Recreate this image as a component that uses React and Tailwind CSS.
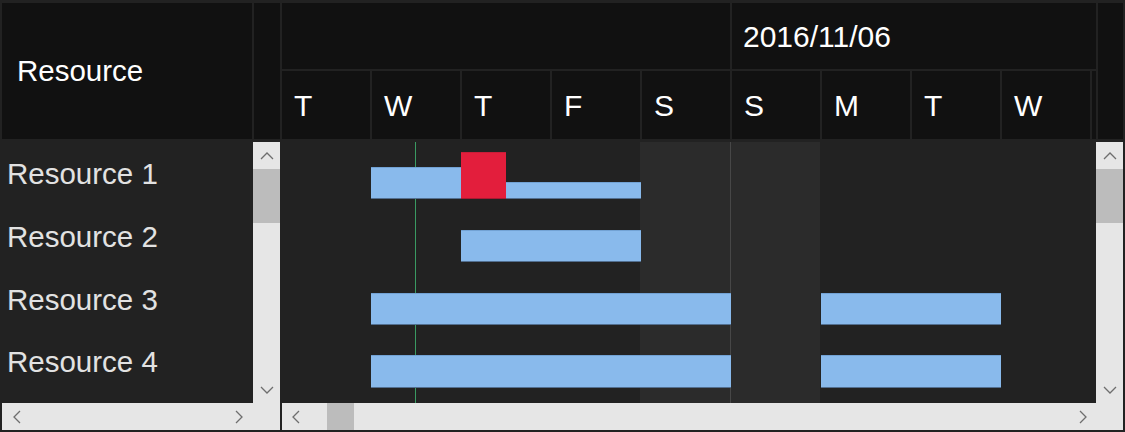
import React from "react";

const days = ["T", "W", "T", "F", "S", "S", "M", "T", "W"];
const resources = ["Resource 1", "Resource 2", "Resource 3", "Resource 4"];

// bars in px relative to the gantt canvas (left, top, width, height)
const bars = [
  { l: 89, t: 25, w: 90, h: 32, kind: "blue" },
  { l: 224, t: 40, w: 135, h: 17, kind: "blue" },
  { l: 179, t: 10, w: 45, h: 47, kind: "red" },
  { l: 179, t: 88, w: 180, h: 32, kind: "blue" },
  { l: 89, t: 151, w: 360, h: 32, kind: "blue" },
  { l: 539, t: 151, w: 180, h: 32, kind: "blue" },
  { l: 89, t: 213, w: 360, h: 33, kind: "blue" },
  { l: 539, t: 213, w: 180, h: 33, kind: "blue" },
];

const Chevron = ({ dir }) => {
  const pts = {
    up: "1,7 7,1 13,7",
    down: "1,1 7,7 13,1",
    left: "7,1 1,7 7,13",
    right: "1,1 7,7 1,13",
  }[dir];
  const vertical = dir === "up" || dir === "down";
  return (
    <svg
      width={vertical ? 14 : 8}
      height={vertical ? 8 : 14}
      viewBox={vertical ? "0 0 14 8" : "0 0 8 14"}
      fill="none"
      stroke="#6e6e6e"
      strokeWidth="1.3"
    >
      <polyline points={pts} />
    </svg>
  );
};

const VScroll = () => (
  <div className="w-[27px] h-full bg-[#e6e6e6] flex flex-col">
    <div className="h-[27px] flex items-center justify-center">
      <Chevron dir="up" />
    </div>
    <div className="h-[54px] bg-[#bcbcbc]" />
    <div className="flex-1" />
    <div className="h-[27px] flex items-center justify-center">
      <Chevron dir="down" />
    </div>
  </div>
);

const App = () => {
  return (
    <div
      className="w-[1125px] h-[432px] bg-[#222] pt-[3px] pb-[2px] px-[2px] flex gap-[2px] overflow-hidden"
      style={{ fontFamily: '"Liberation Sans", Arial, sans-serif' }}
    >
      {/* LEFT PANEL */}
      <div className="w-[278px] flex flex-col">
        <div className="h-[136px] flex gap-[2px]">
          <div className="w-[250px] bg-[#111] flex items-center pl-[15px] text-white text-[29.5px]">
            Resource
          </div>
          <div className="flex-1 bg-[#111]" />
        </div>
        <div className="h-[3px]" />
        <div className="h-[261px] flex">
          <div className="w-[251px] flex flex-col">
            {resources.map((r) => (
              <div
                key={r}
                className="h-[62.7px] flex items-center pl-[5px] pt-[2px] text-[#e2e2e2] text-[29.5px] shrink-0"
              >
                {r}
              </div>
            ))}
          </div>
          <VScroll />
        </div>
        <div className="h-[27px] bg-[#e6e6e6] flex items-center justify-between pl-[11px] pr-[37px]">
          <Chevron dir="left" />
          <Chevron dir="right" />
        </div>
      </div>

      {/* RIGHT PANEL */}
      <div className="flex-1 flex flex-col">
        <div className="h-[136px] flex gap-[2px]">
          <div className="w-[814px] flex flex-col gap-[2px]">
            <div className="h-[66px] flex gap-[2px]">
              <div className="w-[448px] bg-[#111]" />
              <div className="flex-1 bg-[#111] flex items-center pl-[11px] text-white text-[30px]">
                2016/11/06
              </div>
            </div>
            <div className="flex-1 flex gap-[2px] overflow-hidden">
              {days.map((d, i) => (
                <div
                  key={i}
                  className="w-[88px] shrink-0 bg-[#111] flex items-center pl-[12px] text-white text-[30px]"
                >
                  {d}
                </div>
              ))}
              <div className="w-[4px] shrink-0 bg-[#111]" />
            </div>
          </div>
          <div className="flex-1 bg-[#111]" />
        </div>
        <div className="h-[3px]" />
        <div className="h-[261px] flex">
          <div className="w-[814px] relative overflow-hidden">
            {/* weekend shading */}
            <div className="absolute top-0 bottom-0 left-[358px] w-[180px] bg-[#2b2b2b]" />
            <div className="absolute top-0 bottom-0 left-[448px] w-[1px] bg-[#474747]" />
            {/* today line */}
            <div className="absolute top-0 bottom-0 left-[133px] w-[1px] bg-[#3a9a62]" />
            {bars.map((b, i) => (
              <div
                key={i}
                className={
                  b.kind === "red"
                    ? "absolute bg-[#e31e3c] border-t border-t-[#c91d38] border-b border-b-[#a81a32]"
                    : "absolute bg-[#89baec] border-t border-t-[#72a2d4] border-b border-b-[#526f90]"
                }
                style={{ left: b.l, top: b.t, width: b.w, height: b.h }}
              />
            ))}
          </div>
          <VScroll />
        </div>
        <div className="h-[27px] bg-[#e6e6e6] flex items-center">
          <div className="w-[27px] flex items-center justify-center">
            <Chevron dir="left" />
          </div>
          <div className="w-[18px]" />
          <div className="w-[27px] h-full bg-[#bcbcbc]" />
          <div className="flex-1" />
          <div className="w-[27px] flex items-center justify-center">
            <Chevron dir="right" />
          </div>
          <div className="w-[27px]" />
        </div>
      </div>
    </div>
  );
};

export default App;
